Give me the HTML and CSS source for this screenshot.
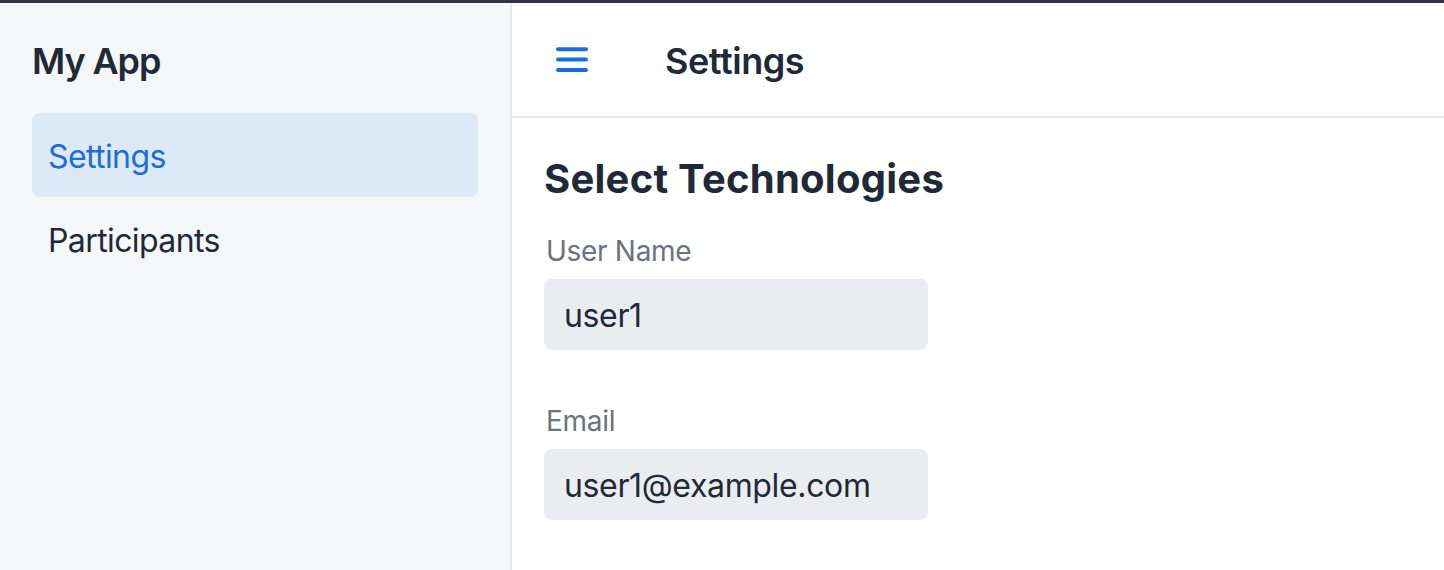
FILE: index.html
```html
<!DOCTYPE html>
<html lang="en">
<head>
<meta charset="utf-8">
<title>My App - Settings</title>
<link rel="stylesheet" href="styles.css">
</head>
<body>
<div class="topbar"></div>
<div class="layout">
  <aside class="sidebar">
    <div class="brand">My App</div>
    <nav class="nav">
      <a class="nav-item active">Settings</a>
      <a class="nav-item">Participants</a>
    </nav>
  </aside>
  <div class="content">
    <header class="header">
      <button class="menu-btn" aria-label="Menu">
        <svg width="32" height="25" viewBox="0 0 32 25" aria-hidden="true">
          <g stroke="currentColor" stroke-width="4" stroke-linecap="round">
            <line x1="2" y1="2.3" x2="30" y2="2.3"/>
            <line x1="2" y1="12.6" x2="30" y2="12.6"/>
            <line x1="2" y1="23" x2="30" y2="23"/>
          </g>
        </svg>
      </button>
      <h1 class="title">Settings</h1>
    </header>
    <main class="main">
      <h2 class="heading">Select Technologies</h2>
      <div class="field">
        <label class="label">User Name</label>
        <div class="input">user1</div>
      </div>
      <div class="field">
        <label class="label">Email</label>
        <div class="input">user1@example.com</div>
      </div>
    </main>
  </div>
</div>
</body>
</html>
```

FILE: styles.css
```css
* { box-sizing: border-box; }
html, body {
  margin: 0;
  padding: 0;
  height: 100%;
}
body {
  font-family: Inter, "Noto Sans", "Liberation Sans", sans-serif;
  color: #1f2937;
  background: #ffffff;
  display: flex;
  flex-direction: column;
  overflow: hidden;
}
.topbar {
  height: 3px;
  background: #2f353f;
  flex: none;
}
.layout {
  flex: 1;
  display: flex;
  min-height: 0;
}
.sidebar {
  width: 512px;
  flex: none;
  background: #f5f6f8;
  border-right: 2px solid #e7e8ec;
  padding: 34px 32px 0 32px;
}
.brand {
  font-size: 36px;
  line-height: 48px;
  font-weight: 600;
  color: #1f2937;
  margin-left: 0;
  letter-spacing: -1.1px;
}
.nav {
  margin-top: 28px;
  display: flex;
  flex-direction: column;
}
.nav-item {
  display: block;
  height: 84px;
  padding-top: 3px;
  line-height: 81px;
  padding-left: 16px;
  font-size: 32px;
  border-radius: 8px;
  color: #1f2937;
  letter-spacing: -0.6px;
}
.nav-item.active {
  background: #dee9f8;
  color: #1a6ce2;
}
.content {
  flex: 1;
  display: flex;
  flex-direction: column;
}
.header {
  height: 115px;
  border-bottom: 2px solid #e7e8ec;
  display: flex;
  align-items: center;
  padding-left: 32px;
  flex: none;
}
.menu-btn {
  border: 0;
  background: none;
  padding: 0 12px;
  margin: 0;
  color: #1a6ce2;
  display: flex;
  align-items: center;
  cursor: pointer;
}
.menu-btn svg { display: block; }
.title {
  margin: 2px 0 0 65px;
  font-size: 36px;
  line-height: 48px;
  font-weight: 600;
  color: #1f2937;
  letter-spacing: -0.45px;
}
.main {
  padding: 37px 32px 0 32px;
}
.heading {
  margin: 0;
  font-size: 40px;
  line-height: 48px;
  font-weight: 700;
  color: #1f2937;
  letter-spacing: 0.25px;
}
.field {
  display: flex;
  flex-direction: column;
  width: 384px;
}
.heading + .field { margin-top: 28px; }
.field + .field { margin-top: 51px; }
.label {
  font-size: 28px;
  line-height: 40px;
  color: #6b7280;
  padding-left: 2px;
  margin-bottom: 8px;
  letter-spacing: -0.3px;
}
.input {
  height: 71px;
  padding-top: 2px;
  line-height: 69px;
  background: #ebecf0;
  border-radius: 8px;
  padding-left: 20px;
  font-size: 32px;
  color: #1f2937;
  letter-spacing: -0.35px;
}
```
